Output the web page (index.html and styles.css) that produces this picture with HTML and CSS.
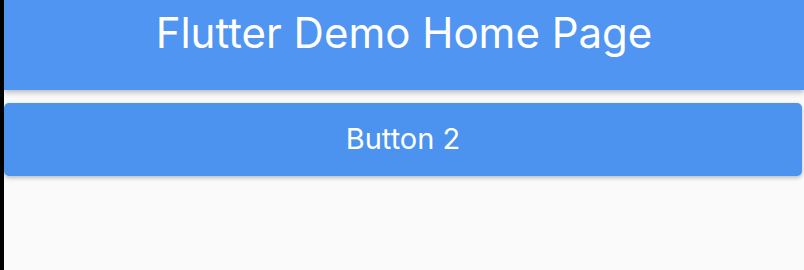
FILE: index.html
```html
<!DOCTYPE html>
<html>
<head>
<meta charset="utf-8">
<link rel="stylesheet" href="styles.css">
</head>
<body>
<div class="screen">
  <header class="appbar"><h1 class="title">Flutter Demo Home Page</h1></header>
  <main class="content">
    <button class="btn">Button 2</button>
  </main>
</div>
</body>
</html>
```
FILE: styles.css
```css
html, body {
  margin: 0;
  padding: 0;
  height: 100%;
  background: #000;
}
.screen {
  margin-left: 4px;
  height: 270px;
  background: #fafafa;
  display: flex;
  flex-direction: column;
  font-family: Inter, "Noto Sans", sans-serif;
}
.appbar {
  height: 90px;
  background: #4f95f1;
  box-shadow: 0 2px 6px rgba(0,0,0,0.3);
  display: flex;
  justify-content: center;
  position: relative;
  z-index: 1;
}
.title {
  margin: 0;
  padding-top: 11px;
  color: #fff;
  font-weight: 400;
  font-size: 42px;
  line-height: 44px;
}
.content {
  padding: 13px 2px 0 0;
}
.btn {
  display: block;
  width: 100%;
  height: 73px;
  border: none;
  border-radius: 5px;
  background: #4c92ef;
  color: #fff;
  font-family: Inter, "Noto Sans", sans-serif;
  font-size: 29px;
  font-weight: 400;
  padding: 0 0 3px 0;
  box-shadow: 0 2px 4px rgba(0,0,0,0.25);
}
```
